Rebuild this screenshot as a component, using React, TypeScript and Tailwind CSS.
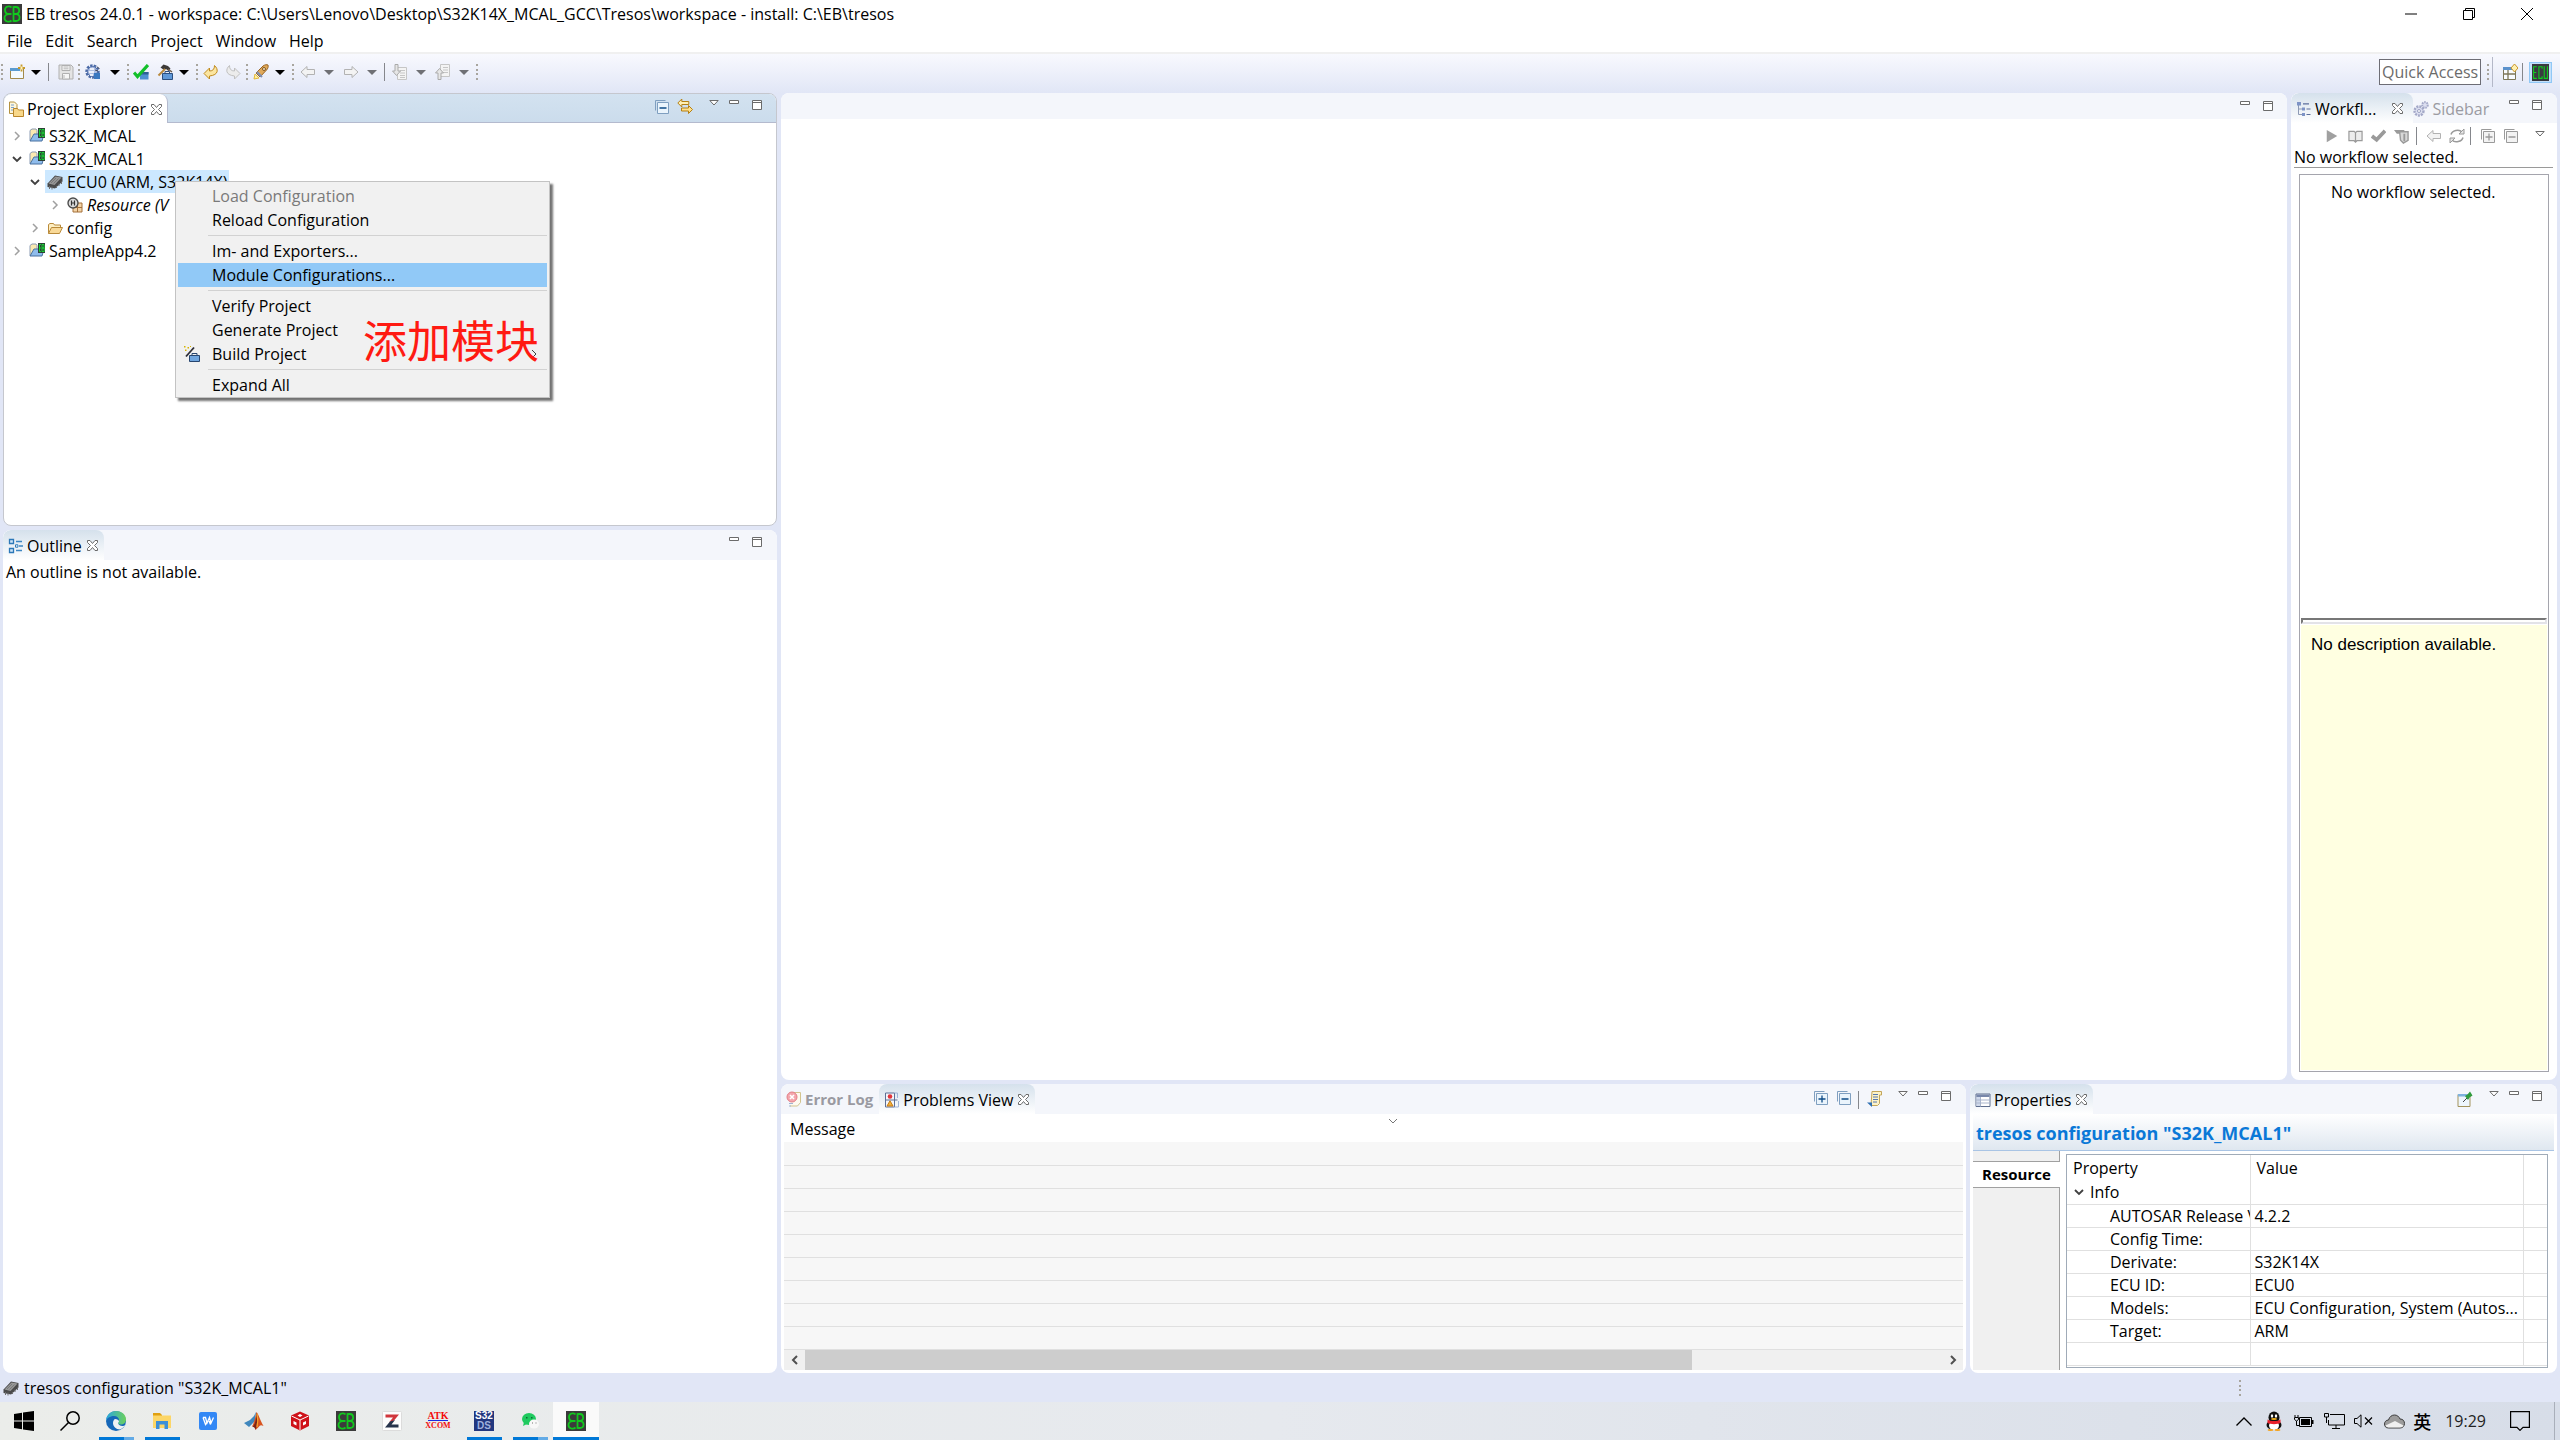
import React, { useState } from 'react';
import clsx from 'clsx';

type IconProps = { className?: string };

/* ---------- shared glyphs ---------- */

function EbLogo({ className = 'h-5 w-5' }: IconProps) {
  return (
    <svg viewBox="0 0 20 20" className={className} aria-hidden="true">
      <rect width="20" height="20" fill="#3b3b3b" />
      <g fill="none" stroke="#11c81e" strokeWidth="1.800">
        <path d="M9.500 3.500C8 1.500 3 2 3 6c0 2.500 1.500 4 4 4h2.500M7 10c-2.500 0-4.500 1.500-4.500 4 0 4 5 4.500 7 2.500" />
        <path d="M11.500 3h2.500c4 0 4.500 7 0 7h-2.500M14 10c5 0 4.500 7 0 7h-2.500" />
        <path d="M11.500 2.200v15.600" />
      </g>
    </svg>
  );
}

function Caret({ light = false }: { light?: boolean }) {
  return (
    <svg viewBox="0 0 10 5" className={clsx('h-[5px] w-[10px]', light ? 'text-[#6f7075]' : 'text-black')} aria-hidden="true">
      <path d="M0 0h10L5 5z" fill="currentColor" />
    </svg>
  );
}

function Dots({ className = 'h-4' }: IconProps) {
  return (
    <svg viewBox="0 0 2 16" className={clsx('w-[2px] shrink-0', className)} aria-hidden="true">
      <path d="M0 0h2v2H0zM0 5h2v2H0zM0 9h2v2H0zM0 14h2v2H0z" fill="#a8a59e" />
    </svg>
  );
}

function CloseGlyph() {
  return (
    <svg viewBox="0 0 11 11" className="h-[11px] w-[11px]" fill="#fff" stroke="#6b6b6b" aria-hidden="true">
      <path d="M.5.5h2.500l2.500 3 2.500-3h2.500V2.500L7.500 5.500l3 3v2H8L5.500 7.500 3 10.500H.5v-2l3-3-3-3z" />
    </svg>
  );
}

function ViewMenuGlyph() {
  return (
    <svg viewBox="0 0 10 6" className="h-[6px] w-[10px]" fill="#fff" stroke="#6b6b6b" aria-hidden="true">
      <path d="M.8.5h8.400L5 5z" />
    </svg>
  );
}

function MinGlyph() {
  return (
    <svg viewBox="0 0 10 4" className="h-[4px] w-[10px]" fill="#fff" stroke="#6b6b6b" aria-hidden="true">
      <path d="M.5.5h9v3h-9z" />
    </svg>
  );
}

function MaxGlyph() {
  return (
    <svg viewBox="0 0 10 10" className="h-[10px] w-[10px]" fill="#fff" stroke="#6b6b6b" aria-hidden="true">
      <path d="M.5.5h9v9h-9zM.5 2.500h9" />
    </svg>
  );
}

function BoxToggle({ plus = false, gray = false }: { plus?: boolean; gray?: boolean }) {
  const line = gray ? '#9a9a9a' : '#7f9fc0';
  const mark = gray ? '#9a9a9a' : '#0b4a86';
  return (
    <svg viewBox="0 0 14 14" className="h-[14px] w-[14px]" aria-hidden="true">
      <path d="M.5 10.500V.5h10" fill="none" stroke={line} />
      <path d="M2.500 2.500h11v11h-11z" fill={gray ? '#f3f3f3' : '#eaf4fc'} stroke={line} />
      <path d={plus ? 'M4.500 8h7M8 4.500v7' : 'M4.500 8h7'} stroke={mark} strokeWidth="1.300" />
    </svg>
  );
}

function Chevron({ open = false }: { open?: boolean }) {
  return (
    <svg viewBox="0 0 10 10" className="h-[10px] w-[10px] shrink-0" fill="none" aria-hidden="true">
      {open ? (
        <path d="M1 3l4 4 4-4" stroke="#404040" strokeWidth="1.800" />
      ) : (
        <path d="M3 1l4 4-4 4" stroke="#a0a0a0" strokeWidth="1.500" />
      )}
    </svg>
  );
}

/* ---------- 16px icons ---------- */

function Icon({ children, className = 'h-4 w-4' }: { children: React.ReactNode; className?: string }) {
  return (
    <svg viewBox="0 0 16 16" className={clsx('shrink-0', className)} fill="none" aria-hidden="true">
      {children}
    </svg>
  );
}

const NewIcon = () => (
  <Icon>
    <path d="M1.500 4.500h13v10h-13z" fill="#f4faff" stroke="#a38a4a" />
    <path d="M1 4h10v3H1z" fill="#5b9bd0" />
    <path d="M12.500.5v7M9 4h7" stroke="#c79a2b" strokeWidth="1.800" />
    <path d="M12.500 2.500v3M11 4h3" stroke="#fff3b8" />
  </Icon>
);

const SaveIcon = () => (
  <Icon>
    <path d="M1 1h12l2 2v12H1z" fill="#e4e4e4" stroke="#b0b0b0" />
    <path d="M4 1.500h8v5H4zM4.500 9.500h7V15h-7z" fill="#f6f6f6" stroke="#b0b0b0" />
    <path d="M5.500 3h5M5.500 4.800h5M6 11v3" stroke="#b8b8b8" />
  </Icon>
);

const GenerateIcon = () => (
  <Icon>
    <circle cx="7.500" cy="7.500" r="6" stroke="#4a69a6" strokeWidth="2.400" strokeDasharray="2.400 1.200" />
    <circle cx="7.500" cy="7.500" r="5" fill="#aebfe4" stroke="#4a69a6" />
    <path d="M5 5h4M4 8h5M5 11h3" stroke="#fff" strokeWidth="1.300" />
    <path d="M9 9h6v6H9z" fill="#3a78c0" />
    <path d="M12 2.500l2.500 2.500M10 6l3 1" stroke="#4b4b58" />
  </Icon>
);

const VerifyIcon = () => (
  <Icon>
    <path d="M7 8h8.500v7.500H7z" fill="#4d8fd0" />
    <path d="M7 8h8.500v2.500H7z" fill="#2f5f95" />
    <path d="M1 8.500l3.500 4L15 1" stroke="#12c02a" strokeWidth="3.200" />
  </Icon>
);

const HammerIcon = () => (
  <Icon>
    <path d="M3.500 3.500l3-3 4.500 1.500 2.500 2.500-2 2.500-2.500-2-2 1z" fill="#3c3a38" />
    <path d="M8 5L1.500 11.500" stroke="#b98a3e" strokeWidth="2" />
    <path d="M11 5l4 3" stroke="#6a5a48" strokeWidth="1.500" />
    <path d="M5.500 9.500h10v6h-10z" fill="#5f98d8" stroke="#2c4f80" />
    <path d="M8 9V7.500h4.500V9" stroke="#2c4f80" />
  </Icon>
);

const UndoIcon = () => (
  <Icon>
    <path d="M1 9.500L6.500 4v3C10 7 11.500 5 11.500 1.500c4 3.500 4.500 9.500-5 10.500v3z" fill="#fbe5a0" stroke="#c08a1c" />
  </Icon>
);

const RedoIcon = () => (
  <Icon>
    <path d="M15 9.500L9.500 4v3C6 7 4.500 5 4.500 1.500.5 5 0 11 9.500 12v3z" fill="#ececec" stroke="#c0c0c0" />
  </Icon>
);

const RocketIcon = () => (
  <Icon>
    <path d="M1 15l1-5 4 4z" fill="#fff0a0" stroke="#e4b83a" />
    <path d="M3 9l7-7c2-1.500 4-1.500 5-1 .5 1.500 0 3.500-1.500 5L7 13z" fill="#e0a95a" stroke="#9a6423" />
    <path d="M4 8l5 5" stroke="#7d8fb5" strokeWidth="2" />
    <circle cx="11" cy="5" r="1.500" fill="#f6e9d2" stroke="#83591f" />
  </Icon>
);

const ArrowLeftIcon = () => (
  <Icon>
    <path d="M1 8l6-5.500V5.500h7.500v5H7v3z" fill="#f3f3f3" stroke="#b2b2b2" />
  </Icon>
);

const ArrowRightIcon = () => (
  <Icon>
    <path d="M15 8L9 2.500V5.500H1.500v5H9v3z" fill="#f3f3f3" stroke="#b2b2b2" />
  </Icon>
);

const NextNoteIcon = () => (
  <Icon>
    <path d="M5.500 3.500h9v12h-9z" fill="#f4f4f4" stroke="#c6c6c6" />
    <path d="M8 6.500h5M8 9h5M8 11.500h5M8 13.500h5" stroke="#c6c6c6" />
    <path d="M3 .5h3V7h2.500l-4 4.500L.5 7H3z" fill="#e6e6e6" stroke="#aaa" />
  </Icon>
);

const PrevNoteIcon = () => (
  <Icon>
    <path d="M5.500.5h9v12h-9z" fill="#f4f4f4" stroke="#c6c6c6" />
    <path d="M8 3.500h5M8 6h5M8 8.500h5" stroke="#c6c6c6" />
    <path d="M3 15.500h3V9h2.500l-4-4.500L.5 9H3z" fill="#e6e6e6" stroke="#aaa" />
  </Icon>
);

const ExplorerIcon = () => (
  <Icon>
    <path d="M1.500 1h5l2.500 2.500v9h-7.500z" fill="#fdf6dc" stroke="#b4913f" />
    <path d="M3 4h3M3 6.500h3M3 9h2" stroke="#7aa0cc" />
    <path d="M5.500 7.500h4l1 1.500h5v6.500h-10z" fill="#f8d88a" stroke="#b9862c" />
  </Icon>
);

const ProjectIcon = () => (
  <Icon>
    <path d="M1 12.500V2.500L3 1h4l1 1.500v10z" fill="#fbe9b0" stroke="#8d9cb5" />
    <path d="M1 13L5 6h10l-2 7z" fill="#8fbcec" stroke="#49719f" />
    <path d="M9 0h7v10H9z" fill="#2f3f38" />
    <path d="M12 1.500h-1.500v7H12M10.500 5H12M13 1.500h2v3.500h-2 2.200v3.500H13z" stroke="#19d234" />
  </Icon>
);

const ChipIcon = () => (
  <Icon>
    <path d="M.5 9.500L8 1.500l7.500 1.500v4.500L8 14.500.5 13z" fill="#4a4a4a" />
    <path d="M1.500 9.500L8.500 2.500l6 1-7 7.500z" fill="#969696" />
    <path d="M4 9l5-5M6.500 9.500l5-5" stroke="#787878" />
    <path d="M2.500 12v3M5 12.500v3M9.500 12v2M12 9.500v2.500M14.500 7.500v2.500" stroke="#6e6e6e" />
  </Icon>
);

const ResourceIcon = () => (
  <Icon>
    <path d="M6 6h9v9H6z" fill="#f3d3a6" stroke="#a4713b" />
    <path d="M6 10.500h9M10.500 6v9" stroke="#a4713b" />
    <circle cx="6" cy="6" r="5" fill="#dcdcdc" stroke="#4c4c4c" strokeWidth="1.400" />
    <path d="M4.500 3.500v5M7.500 3.500v5M4.500 6h3" stroke="#333" strokeWidth="1.200" />
  </Icon>
);

const FolderIcon = () => (
  <Icon>
    <path d="M1.500 13.500v-9l1.500-1h3.500l1 1.500h6v2.500" fill="#fdeec2" stroke="#b98a3a" />
    <path d="M1.500 13.500L4.500 7.500h11l-3 6z" fill="#f9d997" stroke="#b98a3a" />
  </Icon>
);

const LinkEditorIcon = () => (
  <Icon>
    <path d="M.8 5l4-4v2.500h7v3h-7V9z" fill="#fff0b5" stroke="#b57f12" />
    <path d="M15.500 11.500l-4-4V10h-7v3h7v2.500z" fill="#ffe08a" stroke="#b57f12" />
  </Icon>
);

const OutlineIcon = () => (
  <Icon>
    <path d="M1.500 1.500h4v4h-4zM1.500 10.500h4v4h-4z" fill="#cfe4f7" stroke="#2c78b8" strokeWidth="1.300" />
    <path d="M8 3.500h6M8 12.500h6M11 8h4" stroke="#3d86c2" strokeWidth="1.400" />
    <path d="M7.500 6.800h2.400v2.400H7.500z" fill="#fff" stroke="#2c78b8" />
  </Icon>
);

const WorkflowIcon = () => (
  <Icon>
    <path d="M2.500 3v10.500H7M2.500 8H7" stroke="#8d9ab5" />
    <path d="M1 1h4v3.500H1zM6 6.500h3v3H6zM6 12h3v3H6z" fill="#7d93c6" />
    <path d="M7 2.800h6M10.500 8h4M10.500 13.500h4" stroke="#5c6f9c" strokeWidth="1.200" />
  </Icon>
);

const GearsIcon = () => (
  <Icon>
    <circle cx="6" cy="10" r="4.500" fill="#dcdff0" stroke="#a4a9c8" strokeWidth="2.400" strokeDasharray="2 1" />
    <circle cx="6" cy="10" r="1.500" fill="#fff" stroke="#9ba0c2" />
    <circle cx="12" cy="4" r="2.800" fill="#dcdff0" stroke="#a4a9c8" strokeWidth="2" strokeDasharray="1.600 .8" />
  </Icon>
);

const ErrorLogIcon = () => (
  <Icon>
    <path d="M6 1.500h8.500v10l-3 3.500H4" fill="#fdfaf0" stroke="#d3c48e" />
    <circle cx="6" cy="6" r="5" fill="#f4a6ac" stroke="#e27f88" />
    <path d="M4 4l4 4M8 4L4 8" stroke="#fff" strokeWidth="1.600" />
    <path d="M3 12.500h4M3 15h2" stroke="#9fb4d0" />
  </Icon>
);

const ProblemsIcon = () => (
  <Icon>
    <path d="M1.500 1h9v14h-9z" fill="#f4f6fb" stroke="#5d6f95" />
    <path d="M1.500 8h12" stroke="#5d6f95" />
    <path d="M10.500 1h3v5M10.500 15h4v-6" stroke="#9fb4d8" />
    <circle cx="6" cy="4.500" r="2.300" fill="#e2353a" />
    <path d="M6 8.800l3 5.200H3z" fill="#f3b13a" stroke="#c57a14" />
  </Icon>
);

const ScriptIcon = () => (
  <Icon>
    <path d="M5 .5h9.500v3.500h-2v8.500l-2 2H4z" fill="#fdf3c8" stroke="#c3a559" />
    <path d="M6 3.500h5M6 6h5M6 8.500h5M6 11h4" stroke="#5577b0" />
    <path d="M0 11.500h5v4.500z" fill="#2f70b4" />
  </Icon>
);

const PropertiesIcon = () => (
  <Icon>
    <path d="M1 2h14v12.500H1z" fill="#fff" stroke="#5f6f8f" />
    <path d="M1.500 2.500h13V5h-13z" fill="#7787aa" />
    <path d="M1.500 5h4v9h-4z" fill="#cfd9ea" />
    <path d="M1 8h14M1 11h14M5.500 5v9.500" stroke="#a9b5cc" />
  </Icon>
);

const PinIcon = () => (
  <Icon>
    <path d="M1 3.500h12v12H1z" fill="#eef6fd" stroke="#a3935c" />
    <path d="M1 3h10v2.500H1z" fill="#7fb2de" />
    <path d="M6 11l4-4" stroke="#444" />
    <path d="M8 5l3 4 1.500-2.500 3-2L13 .5l-2.500 3z" fill="#2f9b3c" />
  </Icon>
);

const PerspectiveIcon = () => (
  <Icon>
    <path d="M1.500 3.500h12v12h-12z" fill="#f8fbff" stroke="#7d7758" />
    <path d="M1 3h11v3H1z" fill="#5b92cc" />
    <path d="M1.500 10h12M6 6v9.500" stroke="#7d7758" strokeWidth="1.300" />
    <path d="M12.500 0l3.500 4-3.500 4L9 4z" fill="#fff0b0" stroke="#c8952a" />
  </Icon>
);

const EcuIcon = () => (
  <Icon className="h-[17px] w-[17px]">
    <path d="M0 0h16v16H0z" fill="#3a3a40" />
    <path d="M4.500 2.500h-3v11h3M1.500 8h2.500M9.500 4.500v-2h-3v11h3v-2M11.500 2v11.500h3V2" stroke="#11d020" />
  </Icon>
);

const WandIcon = () => (
  <Icon>
    <path d="M2 10.500l8-9" stroke="#2d2d35" strokeWidth="1.800" />
    <path d="M0 0h1.500v1.500H0zM3.500 1H5v1.500H3.500zM1 3.500h1.500V5H1zM6 0h1v1H6z" fill="#d6b400" />
    <path d="M5.500 9.500h10v6h-10z" fill="#6fa5de" stroke="#28466f" />
    <path d="M8 9V7.500h5V9" stroke="#28466f" />
  </Icon>
);

/* ---------- building blocks ---------- */

function IconButton({ label, children, className }: { label: string; children: React.ReactNode; className?: string }) {
  return (
    <button type="button" aria-label={label} title={label} className={clsx('flex shrink-0 items-center justify-center', className)}>
      {children}
    </button>
  );
}

function WindowButtons({ menu = false }: { menu?: boolean }) {
  return (
    <>
      {menu && (
        <IconButton label="View Menu" className="mr-[10px] h-3 items-start">
          <ViewMenuGlyph />
        </IconButton>
      )}
      <IconButton label="Minimize" className="mr-[13px] h-3 items-start">
        <MinGlyph />
      </IconButton>
      <IconButton label="Maximize" className="h-3 items-start">
        <MaxGlyph />
      </IconButton>
    </>
  );
}

type TabProps = {
  icon: React.ReactNode;
  title: string;
  focused?: boolean;
  wide?: boolean;
};

function Tab({ icon, title, focused = false, wide = false }: TabProps) {
  return (
    <div
      role="tab"
      aria-selected="true"
      className={clsx(
        'flex items-center rounded-t-lg pt-px whitespace-nowrap',
        focused ? 'mb-[-1px] border-r border-[#b4bace] bg-white pr-[5px] pl-1' : 'bg-linear-to-b from-[#d5e1ec] to-white pr-[6px] pl-[5px]'
      )}
    >
      {icon}
      <span className="ml-[3px] leading-5">{title}</span>
      <IconButton label={`Close ${title}`} className={wide ? 'mr-1 ml-4' : 'ml-[5px]'}>
        <CloseGlyph />
      </IconButton>
    </div>
  );
}

const panel = 'flex min-h-0 min-w-0 flex-col overflow-hidden rounded-lg bg-white';
const header = 'flex h-[30px] shrink-0 bg-[#f4f6fb]';
const headerTools = 'mr-[15px] ml-auto flex items-start pt-[7px]';

/* ---------- top area ---------- */

function TitleBar() {
  return (
    <header className="flex h-7 items-center bg-white pl-[2px]">
      <EbLogo />
      <h1 className="ml-1 text-base leading-5">
        EB tresos 24.0.1 - workspace: C:\Users\Lenovo\Desktop\S32K14X_MCAL_GCC\Tresos\workspace - install: C:\EB\tresos
      </h1>
      <div className="ml-auto flex">
        <IconButton label="Minimize window" className="h-7 w-[58px]">
          <svg viewBox="0 0 12 12" className="h-3 w-3" stroke="#000" fill="none"><path d="M0 6h12" /></svg>
        </IconButton>
        <IconButton label="Restore window" className="h-7 w-[58px]">
          <svg viewBox="0 0 12 12" className="h-3 w-3" stroke="#000" fill="none"><path d="M.5 2.500h9v9h-9zM2.500 2.500v-2h9v9h-2" /></svg>
        </IconButton>
        <IconButton label="Close window" className="mr-1 h-7 w-[58px]">
          <svg viewBox="0 0 12 12" className="h-3 w-3" stroke="#000" fill="none"><path d="M0 0l12 12M12 0L0 12" /></svg>
        </IconButton>
      </div>
    </header>
  );
}

function MenuBar() {
  const menus = ['File', 'Edit', 'Search', 'Project', 'Window', 'Help'];
  return (
    <nav className="flex h-[26px] items-center gap-[13px] border-b-2 border-[#f0f0f0] bg-white pt-[2px] pl-[7px]">
      {menus.map((m) => (
        <button key={m} type="button" className="leading-5">
          {m}
        </button>
      ))}
    </nav>
  );
}

function DropTool({ label, icon, light }: { label: string; icon: React.ReactNode; light?: boolean }) {
  return (
    <div className={clsx('flex items-center', light ? 'gap-2' : 'gap-[6px]')}>
      <IconButton label={label}>{icon}</IconButton>
      <IconButton label={`${label} options`}>
        <Caret light={light} />
      </IconButton>
    </div>
  );
}

function Toolbar() {
  return (
    <div className="flex h-[39px] items-center bg-linear-to-b from-[#f8f9fe] to-[#e1e6f6] pb-[3px] pl-[1px]">
      <Dots />
      <div className="ml-[6px] flex items-center gap-[7px]">
        <DropTool label="New" icon={<NewIcon />} />
        <span className="h-[18px] w-px bg-[#85878c]" />
        <span className="ml-[2px]">
          <IconButton label="Save"><SaveIcon /></IconButton>
        </span>
        <div className="ml-[-3px]"><Dots /></div>
        <div className="ml-[-2px] flex items-center gap-[6px]">
          <IconButton label="Generate code"><GenerateIcon /></IconButton>
          <span className="ml-[3px]"><Caret /></span>
        </div>
        <Dots />
        <div className="ml-[-3px] flex items-center gap-2">
          <IconButton label="Verify"><VerifyIcon /></IconButton>
          <DropTool label="Build" icon={<HammerIcon />} />
        </div>
        <Dots />
        <div className="ml-[-2px] flex items-center gap-[6px]">
          <IconButton label="Undo"><UndoIcon /></IconButton>
          <IconButton label="Redo"><RedoIcon /></IconButton>
        </div>
        <div className="ml-[-2px]"><Dots /></div>
        <div className="ml-[-2px]"><DropTool label="Wizards" icon={<RocketIcon />} /></div>
        <Dots />
        <div className="ml-[-1px] flex items-center gap-[9px]">
          <DropTool label="Back" icon={<ArrowLeftIcon />} light />
          <DropTool label="Forward" icon={<ArrowRightIcon />} light />
        </div>
        <span className="h-[18px] w-px bg-[#85878c]" />
        <div className="flex items-center gap-[9px]">
          <DropTool label="Next annotation" icon={<NextNoteIcon />} light />
          <DropTool label="Previous annotation" icon={<PrevNoteIcon />} light />
        </div>
        <Dots />
      </div>
      <div className="mr-2 ml-auto flex items-center">
        <input
          type="text"
          aria-label="Quick Access"
          placeholder="Quick Access"
          className="h-[26px] w-[102px] border border-[#6d6d75] bg-white px-[2px] text-base leading-5 outline-none placeholder:text-[#6b6b6b]"
        />
        <Dots className="ml-[6px] h-5" />
        <span className="ml-[3px] h-[30px] w-px bg-[#b4b8c8]" />
        <IconButton label="Open Perspective" className="ml-[9px]"><PerspectiveIcon /></IconButton>
        <span className="ml-[4px] h-[18px] w-px bg-[#85878c]" />
        <IconButton label="ECU perspective" className="ml-[6px] h-[21px] w-[23px] border border-[#90c8f6] bg-[#c4e0fa]">
          <EcuIcon />
        </IconButton>
      </div>
    </div>
  );
}

/* ---------- project explorer ---------- */

type Node = {
  label: string;
  icon: React.ReactNode;
  indent: string;
  open?: boolean;
  selected?: boolean;
  italic?: boolean;
};

const nodes: Node[] = [
  { label: 'S32K_MCAL', icon: <ProjectIcon />, indent: 'pl-2' },
  { label: 'S32K_MCAL1', icon: <ProjectIcon />, indent: 'pl-2', open: true },
  { label: 'ECU0 (ARM, S32K14X)', icon: <ChipIcon />, indent: 'pl-[26px]', open: true, selected: true },
  { label: 'Resource (V', icon: <ResourceIcon />, indent: 'pl-[46px]', italic: true },
  { label: 'config', icon: <FolderIcon />, indent: 'pl-[26px]' },
  { label: 'SampleApp4.2', icon: <ProjectIcon />, indent: 'pl-2' },
];

function ContextMenu() {
  const [active, setActive] = useState('Module Configurations...');
  const groups = [
    ['Load Configuration', 'Reload Configuration'],
    ['Im- and Exporters...', 'Module Configurations...'],
    ['Verify Project', 'Generate Project', 'Build Project'],
    ['Expand All'],
  ];
  return (
    <div
      role="menu"
      className="absolute top-[181px] left-[175px] z-10 w-[375px] border border-[#c3c3c3] bg-[#f1f1f1] px-[2px] pt-[2px] shadow-[3px_3px_2px_rgba(0,0,0,0.55)]"
    >
      {groups.map((items, i) => (
        <div key={i}>
          {i > 0 && <div className="my-[3px] ml-[30px] h-px bg-[#d2d2d2]" />}
          {items.map((item) => (
            <button
              key={item}
              type="button"
              role="menuitem"
              disabled={item === 'Load Configuration'}
              onMouseEnter={() => setActive(item)}
              className={clsx(
                'flex h-6 w-full items-center text-left disabled:text-[#7a7a7a]',
                active === item && 'bg-[#91c9f7]'
              )}
            >
              <span className="flex w-[34px] pl-[6px]">{item === 'Build Project' && <WandIcon />}</span>
              {item}
              {item === 'Build Project' && (
                <svg viewBox="0 0 6 10" className="mr-[10px] ml-auto h-[10px] w-[6px]" fill="none" stroke="#404040">
                  <path d="M1 1l4 4-4 4" />
                </svg>
              )}
            </button>
          ))}
        </div>
      ))}
      <p className="pointer-events-none absolute right-[10px] bottom-8 font-['Noto_Sans_CJK_SC',sans-serif] text-[44px] leading-[52px] whitespace-nowrap text-[#ff1a12]">
        添加模块
      </p>
    </div>
  );
}

function ProjectExplorer() {
  return (
    <section className={clsx(panel, 'grow-[432] basis-0 border border-[#c5c7ce]')}>
      <div className="flex h-[29px] shrink-0 border-b border-[#b4bace] bg-linear-to-b from-[#d3e2f0] to-[#cbdcec]">
        <Tab icon={<ExplorerIcon />} title="Project Explorer" focused />
        <div className="mr-[14px] ml-auto flex items-start pt-[6px]">
          <IconButton label="Collapse All" className="mr-2"><BoxToggle /></IconButton>
          <IconButton label="Link with Editor" className="mr-4 mt-[-2px]"><LinkEditorIcon /></IconButton>
          <WindowButtons menu />
        </div>
      </div>
      <ul role="tree" className="pt-px">
        {nodes.map((n) => (
          <li key={n.label} role="treeitem" aria-expanded={!!n.open} className={clsx('flex h-[23px] items-center', n.indent)}>
            <Chevron open={n.open} />
            <span
              className={clsx(
                'ml-[5px] flex h-[23px] items-center gap-1 pr-[2px] pl-[2px] whitespace-nowrap',
                n.selected && 'bg-[#cce8ff]',
                n.italic && 'italic'
              )}
            >
              {n.icon}
              {n.label}
            </span>
          </li>
        ))}
      </ul>
    </section>
  );
}

function Outline() {
  return (
    <section className={clsx(panel, 'grow-[844] basis-0')}>
      <div className={header}>
        <Tab icon={<OutlineIcon />} title="Outline" />
        <div className={headerTools}>
          <WindowButtons />
        </div>
      </div>
      <p className="pl-[3px]">An outline is not available.</p>
    </section>
  );
}

/* ---------- centre and right ---------- */

function Editor() {
  return (
    <main className={clsx(panel, 'flex-1')}>
      <div className="flex h-[26px] shrink-0 justify-end bg-[#f4f6fb] pt-2 pr-[14px]">
        <WindowButtons />
      </div>
    </main>
  );
}

function Workflows() {
  return (
    <aside className={clsx(panel, 'w-[266px]')}>
      <div className={header}>
        <Tab icon={<WorkflowIcon />} title="Workfl..." wide />
        <button type="button" role="tab" className="flex items-center gap-[3px] pt-px text-[#9b9ba2]">
          <GearsIcon />
          Sidebar
        </button>
        <div className={headerTools}>
          <WindowButtons />
        </div>
      </div>
      <div className="mt-[3px] flex h-5 shrink-0 items-center justify-end pr-3 text-[#9a9a9a]">
        <IconButton label="Run" className="mr-[9px]">
          <Icon className="h-[14px] w-[14px]"><path d="M2 1l12 7-12 7z" fill="#a0a0a0" /></Icon>
        </IconButton>
        <IconButton label="Documentation" className="mr-2">
          <Icon className="h-[15px] w-[15px]">
            <path d="M1 2.500h5.500L8 4l1.500-1.500H15V12.500H9.500L8 14l-1.500-1.500H1zM8 4v10" fill="#ededed" stroke="#9a9a9a" strokeWidth="1.300" />
          </Icon>
        </IconButton>
        <IconButton label="Mark done" className="mr-[8px]">
          <Icon className="h-[15px] w-[15px]"><path d="M1 7.500l5 4L15 2" stroke="#9a9a9a" strokeWidth="4" /></Icon>
        </IconButton>
        <IconButton label="Skip" className="mr-[7px]">
          <Icon className="h-[15px] w-[15px]">
            <path d="M0 1h11v4H3z" fill="#9a9a9a" />
            <path d="M6 3h9v9l-5 3-3-3z" fill="#d8d8d8" stroke="#9a9a9a" strokeWidth="1.500" />
            <path d="M11 5v8" stroke="#9a9a9a" strokeWidth="2" />
          </Icon>
        </IconButton>
        <span className="mr-[9px] h-[18px] w-px bg-[#85878c]" />
        <IconButton label="Back" className="mr-[7px]"><ArrowLeftIcon /></IconButton>
        <IconButton label="Refresh" className="mr-[5px]">
          <Icon>
            <path d="M2 6.500C3 2.500 10 .5 13 4M14 9.500c-1 4-8 6-11 2.500" stroke="#9a9a9a" strokeWidth="1.500" />
            <path d="M15 1v5h-5zM1 15v-5h5z" fill="#e8e8e8" stroke="#9a9a9a" />
          </Icon>
        </IconButton>
        <span className="mr-[10px] h-[18px] w-px bg-[#85878c]" />
        <IconButton label="Expand All" className="mr-[9px]"><BoxToggle plus gray /></IconButton>
        <IconButton label="Collapse All" className="mr-[17px]"><BoxToggle gray /></IconButton>
        <IconButton label="View Menu" className="mb-1"><ViewMenuGlyph /></IconButton>
      </div>
      <p className="mr-1 ml-[3px] h-[22px] shrink-0 border-b border-[#9a9a9a] pt-px leading-5">No workflow selected.</p>
      <div className="mx-2 mt-[6px] mb-2 flex min-h-0 flex-1 flex-col border border-[#a5a5ad]">
        <p className="grow-[445] basis-0 pt-[5px] pl-[31px]">No workflow selected.</p>
        <div className="mx-px h-[6px] shrink-0 border-2 border-[#e3e3e8] border-t-[#777] border-l-[#777] bg-white" />
        <p className="m-px grow-[444] basis-0 bg-[#ffffe1] pt-2 pl-[10px] font-['Liberation_Sans',sans-serif] text-[17px]">
          No description available.
        </p>
      </div>
    </aside>
  );
}

/* ---------- bottom ---------- */

function Problems() {
  return (
    <section className={clsx(panel, 'flex-1')}>
      <div className={header}>
        <button type="button" role="tab" className="mr-[6px] ml-[5px] flex items-center gap-[3px] text-[15px] font-bold text-[#9a9aa1]">
          <ErrorLogIcon />
          Error Log
        </button>
        <Tab icon={<ProblemsIcon />} title="Problems View" />
        <div className={headerTools}>
          <IconButton label="Expand All" className="mr-[9px]"><BoxToggle plus /></IconButton>
          <IconButton label="Collapse All" className="mr-[7px]"><BoxToggle /></IconButton>
          <span className="mr-[8px] h-[18px] w-px bg-[#85878c]" />
          <IconButton label="Show log" className="mr-[15px]"><ScriptIcon /></IconButton>
          <WindowButtons menu />
        </div>
      </div>
      <div className="mx-[3px] flex min-h-0 flex-1 flex-col">
        <table className="w-full border-collapse">
          <thead>
            <tr className="h-7">
              <th scope="col" className="relative p-0 pt-[2px] pl-[6px] text-left leading-5 font-normal">
                Message
                <svg viewBox="0 0 10 6" className="absolute top-1 left-[604px] h-[6px] w-[10px]" fill="none" stroke="#777">
                  <path d="M1 1l4 4 4-4" />
                </svg>
              </th>
            </tr>
          </thead>
          <tbody>
            {Array.from({ length: 9 }, (_, i) => (
              <tr key={i} className="h-[23px] border-b border-[#e0e0e0] bg-[#f7f7f7]">
                <td className="p-0" />
              </tr>
            ))}
          </tbody>
        </table>
        <div className="mt-auto mb-[3px] flex h-5 bg-[#f0f0f0]">
          <IconButton label="Scroll left" className="w-[21px]">
            <svg viewBox="0 0 8 10" className="h-[10px] w-2" fill="none" stroke="#505050" strokeWidth="2"><path d="M6 1L2 5l4 4" /></svg>
          </IconButton>
          <div className="flex flex-1">
            <div className="w-[78%] bg-[#cdcdcd]" />
          </div>
          <IconButton label="Scroll right" className="w-[21px]">
            <svg viewBox="0 0 8 10" className="h-[10px] w-2" fill="none" stroke="#505050" strokeWidth="2"><path d="M2 1l4 4-4 4" /></svg>
          </IconButton>
        </div>
      </div>
    </section>
  );
}

const properties = [
  ['AUTOSAR Release V', '4.2.2'],
  ['Config Time:', ''],
  ['Derivate:', 'S32K14X'],
  ['ECU ID:', 'ECU0'],
  ['Models:', 'ECU Configuration, System (Autos...'],
  ['Target:', 'ARM'],
];

function Properties() {
  const cell = 'border-r border-[#e0e0e0] p-0 overflow-hidden whitespace-nowrap';
  return (
    <section className={clsx(panel, 'w-[587px]')}>
      <div className={header}>
        <Tab icon={<PropertiesIcon />} title="Properties" />
        <div className={headerTools}>
          <IconButton label="Pin to selection" className="mr-4"><PinIcon /></IconButton>
          <WindowButtons menu />
        </div>
      </div>
      <h2 className="mx-[3px] h-[37px] shrink-0 border-b border-[#a9c4e4] bg-linear-to-b from-white to-[#dfe7f0] pt-px pl-[3px] text-lg leading-9 font-bold text-[#0a78d7]">
        tresos configuration "S32K_MCAL1"
      </h2>
      <div className="mx-[3px] mb-[3px] flex min-h-0 flex-1">
        <div className="flex w-[87px] flex-col">
          <div className="h-[11px] border-r border-b border-[#a0a0a0] bg-[#f0f0f0]" />
          <button type="button" className="h-[25px] pb-[2px] text-[15px] leading-5 font-bold">Resource</button>
          <div className="flex-1 border-t border-r border-[#a0a0a0] bg-[#f0f0f0]" />
        </div>
        <div className="mt-[3px] mr-[6px] mb-[2px] ml-[6px] min-w-0 flex-1 overflow-hidden border border-[#a0abb8]">
          <table className="w-full table-fixed border-collapse">
            <colgroup>
              <col className="w-[183px]" />
              <col />
              <col className="w-[24px]" />
            </colgroup>
            <thead>
              <tr className="h-[26px]">
                <th scope="col" className={clsx(cell, 'pl-[6px] text-left font-normal')}>Property</th>
                <th scope="col" className={clsx(cell, 'pl-[6px] text-left font-normal')}>Value</th>
                <td />
              </tr>
            </thead>
            <tbody className="leading-5">
              <tr className="h-[23px] border-b border-[#e0e0e0]">
                <td className={cell}>
                  <span className="flex items-center gap-[6px] pl-[7px]">
                    <Chevron open />
                    Info
                  </span>
                </td>
                <td className={cell} />
                <td />
              </tr>
              {properties.map(([name, value]) => (
                <tr key={name} className="h-[23px] border-b border-[#e0e0e0]">
                  <td className={clsx(cell, 'pl-[43px]')}>{name}</td>
                  <td className={clsx(cell, 'pl-1')}>{value}</td>
                  <td />
                </tr>
              ))}
              <tr className="h-[23px] border-b border-[#e0e0e0]">
                <td className={cell} />
                <td className={cell} />
                <td />
              </tr>
            </tbody>
          </table>
        </div>
      </div>
    </section>
  );
}

function StatusBar() {
  return (
    <footer className="flex h-[29px] shrink-0 items-center pl-[3px]">
      <ChipIcon />
      <span className="ml-[5px]">tresos configuration "S32K_MCAL1"</span>
      <Dots className="mr-[319px] ml-auto" />
    </footer>
  );
}

/* ---------- taskbar ---------- */

const apps: { name: string; state?: 'open' | 'stacked' | 'active'; icon: React.ReactNode }[] = [
  {
    name: 'Start',
    icon: <svg viewBox="0 0 20 20" className="h-5 w-5"><path d="M0 3l8-1.200V9.500H0zM9 1.600L20 0v9.500H9zM0 10.500h8v7.700L0 17zM9 10.500h11V20L9 18.400z" /></svg>,
  },
  {
    name: 'Search',
    icon: (
      <svg viewBox="0 0 20 20" className="h-5 w-5" fill="none" stroke="#000" strokeWidth="1.500">
        <circle cx="13" cy="7" r="6.200" />
        <path d="M8.500 11.500L.5 19.500" />
      </svg>
    ),
  },
  {
    name: 'Edge',
    state: 'stacked',
    icon: (
      <svg viewBox="0 0 20 20" className="h-5 w-5">
        <defs>
          <linearGradient id="edge" x1="0" x2="1"><stop offset="0" stopColor="#2aa7e0" /><stop offset="1" stopColor="#6bd05a" /></linearGradient>
        </defs>
        <circle cx="10" cy="10" r="10" fill="#1567b8" />
        <path d="M0 10C0 4 5 0 10 0c6 0 10 4 10 8.500 0 3-2.500 5-5 5-2 0-3-.8-3-1.500s1-1 1-3c0-2-2-4-5-4C4 5 .5 7.500 0 10z" fill="url(#edge)" />
        <path d="M12 12c0 1.500 2 3 4.500 3 1 0 2-.5 2.500-1-1 2-3 4-5 4.500-4 0-7-3-7-6.500 0-2 1-3.500 2-4 2 0 4 1 4 2.500 0 .5-1 1-1 1.500z" fill="#eef1f3" />
      </svg>
    ),
  },
  {
    name: 'File Explorer',
    state: 'open',
    icon: (
      <svg viewBox="0 0 20 20" className="h-5 w-5">
        <path d="M1 2h7l2 2v3H1z" fill="#e0a010" />
        <path d="M1 4.500h18V17H1z" fill="#fcd667" />
        <path d="M4 18V10h12v8h-3.500v-4.500h-5V18z" fill="#3c8fd8" />
      </svg>
    ),
  },
  {
    name: 'WPS Office',
    icon: (
      <svg viewBox="0 0 20 20" className="h-5 w-5">
        <rect x="1" y="1" width="18" height="18" rx="2" fill="#3388f5" />
        <path d="M5 6.500h2.500L9 12l2.500-5.500L13 12l2.500-5.500M5 6.500l2.500 7L9.500 10M11 10l1.500 3.500" fill="none" stroke="#fff" strokeWidth="1.300" />
      </svg>
    ),
  },
  {
    name: 'MATLAB',
    icon: (
      <svg viewBox="0 0 20 20" className="h-5 w-5">
        <path d="M0 12l6-3 4-4 2-4-1 9-6 6z" fill="#3f87bd" />
        <path d="M12.500 1c2 2 4 9 7 14-2-1-3-1-4 0s-2.500 3-4 4c0-2-1-4-3.500-3.500C10 12 11.500 6 12.500 1z" fill="#d9541f" />
        <path d="M12.500 1c0 6-1 12-4 15 2-.5 2.500 1 3 3 2-6 2-12 1-18z" fill="#7c2418" />
        <path d="M13 3c1 4 1 9 0 13" stroke="#f5a12c" fill="none" strokeWidth="1.300" />
      </svg>
    ),
  },
  {
    name: 'Red Cube',
    icon: (
      <svg viewBox="0 0 20 20" className="h-5 w-5">
        <path d="M10 .5l9 4v10.500l-9 4.500-9-4.500V4.500z" fill="#cf1219" />
        <path d="M1.500 5L10 9l8.500-4M10 9v10" stroke="#fff" fill="none" />
        <path d="M10 3l2.500 1.500L10 6 7.500 4.500zM3.500 10l3 1.500v3l-3-1.500zM13 11.500l3-1.500v3l-3 1.500z" fill="#fff" />
      </svg>
    ),
  },
  { name: 'EB tresos', icon: <EbLogo /> },
  {
    name: 'Z editor',
    icon: (
      <svg viewBox="0 0 20 20" className="h-5 w-5">
        <rect x=".5" y=".5" width="19" height="19" rx="1" fill="#fdfdfd" stroke="#dcdcdc" />
        <path d="M3.500 3.500h13.500l-5 6-5 2 4-5H3.500z" fill="#d0363c" />
        <path d="M16.500 16.500H3l5-6 5-1.500-3.500 4.500h7z" fill="#27344c" />
      </svg>
    ),
  },
  {
    name: 'ATK XCOM',
    icon: (
      <span className="flex h-5 w-5 flex-col items-center text-center font-['Liberation_Serif',serif] leading-[9px] font-bold text-[#f30b0b]">
        <span className="border-b border-[#1b28e0] text-[10px]">ATK</span>
        <span className="text-[8px]">XCOM</span>
      </span>
    ),
  },
  {
    name: 'S32 Design Studio',
    state: 'open',
    icon: (
      <span className="flex h-5 w-5 flex-col items-center bg-[#22377f] font-['Liberation_Sans',sans-serif] text-[10px] leading-[10px] font-bold text-white">
        <span>S32</span>
        <span className="text-[#9fb0dd]">DS</span>
      </span>
    ),
  },
  {
    name: 'WeChat',
    state: 'stacked',
    icon: (
      <svg viewBox="0 0 20 20" className="h-5 w-5">
        <ellipse cx="9" cy="8" rx="7" ry="6" fill="#1fca5f" />
        <path d="M4 11l-1 4 4-2z" fill="#1fca5f" />
        <ellipse cx="14" cy="13" rx="5" ry="4.500" fill="#f8f8f8" />
        <path d="M6 6h1.500v1.500H6zM11 6h1.500v1.500H11z" fill="#0b6b34" />
        <path d="M12 11.500h1v1h-1zM15.500 11.500h1v1h-1z" fill="#777" />
      </svg>
    ),
  },
  { name: 'EB tresos (running)', state: 'active', icon: <EbLogo /> },
];

function Taskbar() {
  return (
    <div className="flex h-[38px] shrink-0 items-stretch bg-linear-to-r from-[#ebedea] via-[#e6e9ee] to-[#d7dde8] pl-px">
      {apps.map((a) => (
        <button
          key={a.name}
          type="button"
          aria-label={a.name}
          className={clsx('flex w-[46px] flex-col items-center pt-[9px]', a.state === 'active' && 'bg-[#fafafa]')}
        >
          {a.icon}
          {a.state && (
            <span className={clsx('mt-auto flex h-[3px] bg-[#0078d7]', a.state === 'active' ? 'w-full' : 'w-[35px]')}>
              {a.state === 'stacked' && <span className="ml-auto w-[10px] bg-[#63abe6]" />}
            </span>
          )}
        </button>
      ))}
      <div className="mr-[5px] ml-auto flex items-center">
        <IconButton label="Show hidden icons" className="mr-[13px]">
          <svg viewBox="0 0 16 9" className="h-[9px] w-4" fill="none" stroke="#000" strokeWidth="1.300"><path d="M.5 8.500L8 1l7.500 7.500" /></svg>
        </IconButton>
        <IconButton label="QQ" className="mr-[11px]">
          <svg viewBox="0 0 18 20" className="h-5 w-[18px]">
            <ellipse cx="9" cy="6.500" rx="5.500" ry="6" fill="#111" />
            <ellipse cx="9" cy="14" rx="7.500" ry="5" fill="#111" />
            <ellipse cx="9" cy="14.500" rx="5" ry="4.500" fill="#fff" />
            <path d="M2.500 8.500c3 2 10 2 13 0v3.500c-3 1.500-10 1.500-13 0z" fill="#e8202a" />
            <ellipse cx="7" cy="5" rx="1.200" ry="1.700" fill="#fff" />
            <ellipse cx="11" cy="5" rx="1.200" ry="1.700" fill="#fff" />
            <ellipse cx="9" cy="8" rx="3" ry="1" fill="#f5b21a" />
            <ellipse cx="5.500" cy="19" rx="3" ry="1" fill="#f5a11a" />
            <ellipse cx="12.500" cy="19" rx="3" ry="1" fill="#f5a11a" />
          </svg>
        </IconButton>
        <IconButton label="Battery" className="mr-[10px]">
          <svg viewBox="0 0 20 14" className="h-[14px] w-5" fill="none" stroke="#000">
            <path d="M1 1v2M4 1v2M.5 3.500h4v2l-2 1.500-2-1.500zM2.500 7v4.500H5" />
            <path d="M5.500 3.500h12v9h-12z" />
            <path d="M7 5h9v6H7zM18 6h1.500v4H18z" fill="#000" stroke="none" />
          </svg>
        </IconButton>
        <IconButton label="Network" className="mr-[9px]">
          <svg viewBox="0 0 21 17" className="h-[17px] w-[21px]" fill="none" stroke="#000">
            <path d="M6 1.500h14.500v10.500H4.500V7M12 12v3.500M8 15.500h8" />
            <path d="M.5.500h4v3.500h-4zM2.500 4v6" />
          </svg>
        </IconButton>
        <IconButton label="Volume muted" className="mr-[11px]">
          <svg viewBox="0 0 19 14" className="h-[14px] w-[19px]" fill="none" stroke="#000">
            <path d="M.5 4.500H3L7 .8v12.400L3 9.500H.5z" />
            <path d="M11 3.500l7 7M18 3.500l-7 7" strokeWidth="1.200" />
          </svg>
        </IconButton>
        <IconButton label="OneDrive" className="mr-[8px]">
          <svg viewBox="0 0 21 15" className="h-[15px] w-[21px]">
            <path d="M4.500 14C1.500 14 .5 12 .5 10s1.500-4 4-4c1-3.500 3.500-5 6-5s4.500 1.500 5.500 4c3 0 4.500 2 4.500 4.500S18.500 14 16 14z" fill="#9c9c9c" stroke="#3c3c3c" />
            <path d="M1.500 11.500L11 7l8.500 4.500c-.5 1.300-1.500 2-3.500 2H4.500c-1.500 0-2.500-.7-3-2z" fill="#f0f0f0" />
          </svg>
        </IconButton>
        <button type="button" className="mr-[14px] font-['Noto_Sans_CJK_SC',sans-serif] text-lg leading-5 font-medium">英</button>
        <time className="mr-[24px] text-base leading-5 text-[#222]">19:29</time>
        <IconButton label="Notifications" className="mr-[24px]">
          <svg viewBox="0 0 20 20" className="h-5 w-5" fill="none" stroke="#000" strokeWidth="1.200">
            <path d="M.6.6h18.800v15.800h-6.400L10 19.400 7 16.400H.6z" />
          </svg>
        </IconButton>
        <span className="h-[38px] w-px bg-[#a9afba]" />
      </div>
    </div>
  );
}

export default function App() {
  return (
    <div className="relative flex h-screen flex-col bg-[#e1e6f6] font-['Open_Sans',sans-serif] text-base leading-6 text-black">
      <TitleBar />
      <MenuBar />
      <Toolbar />
      <div className="flex min-h-0 flex-1 gap-1 pr-[3px] pl-[3px]">
        <div className="flex w-[774px] flex-col gap-1">
          <ProjectExplorer />
          <Outline />
        </div>
        <div className="flex min-w-0 flex-1 flex-col gap-1">
          <div className="flex min-h-0 flex-1 gap-1">
            <Editor />
            <Workflows />
          </div>
          <div className="flex h-[289px] shrink-0 gap-1">
            <Problems />
            <Properties />
          </div>
        </div>
      </div>
      <StatusBar />
      <Taskbar />
      <ContextMenu />
    </div>
  );
}
